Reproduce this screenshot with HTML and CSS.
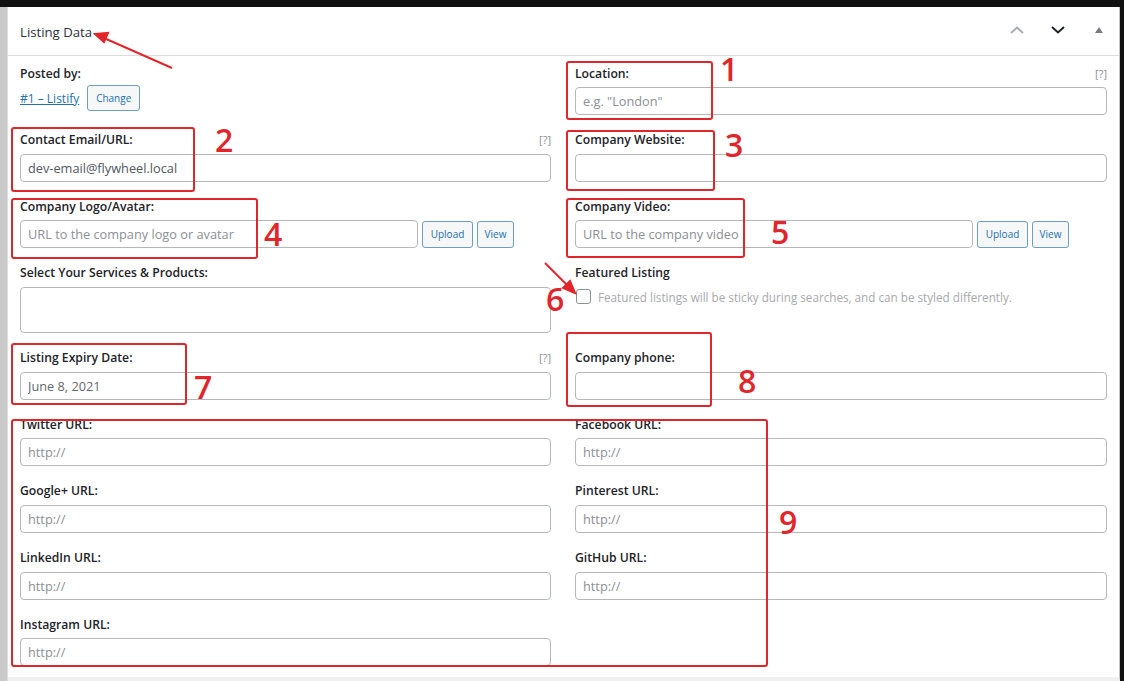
FILE: index.html
```html
<!DOCTYPE html>
<html lang="en">
<head>
<meta charset="utf-8">
<title>Listing Data</title>
<link rel="stylesheet" href="styles.css">
</head>
<body>
<div class="screen">
  <div class="side-strip"></div>
  <div class="panel">
    <div class="panel-head">
      <h2 class="panel-title">Listing Data</h2>
      <div class="head-actions">
        <span class="head-btn up"><svg width="14" height="8" viewBox="0 0 14 8"><path d="M1 7 L7 1.5 L13 7" fill="none" stroke="currentColor" stroke-width="1.8"/></svg></span>
        <span class="head-btn down"><svg width="14" height="8" viewBox="0 0 14 8"><path d="M1 1 L7 6.5 L13 1" fill="none" stroke="currentColor" stroke-width="2"/></svg></span>
        <span class="head-btn toggle"><svg width="8" height="6" viewBox="0 0 8 6"><path d="M0 6 L4 0 L8 6 Z" fill="currentColor"/></svg></span>
      </div>
    </div>
    <div class="panel-body">
      <div class="field">
        <div class="label-row"><label>Posted by:</label></div>
        <div class="posted-row"><a href="#" class="author-link">#1 – Listify</a><button class="btn small">Change</button></div>
      </div>
      <div class="field">
        <div class="label-row"><label>Location:</label><span class="tip">[?]</span></div>
        <input class="text" type="text" placeholder="e.g. &quot;London&quot;">
      </div>

      <div class="field">
        <div class="label-row"><label>Contact Email/URL:</label><span class="tip">[?]</span></div>
        <input class="text" type="text" value="dev-email@flywheel.local">
      </div>
      <div class="field">
        <div class="label-row"><label>Company Website:</label></div>
        <input class="text" type="text">
      </div>

      <div class="field">
        <div class="label-row"><label>Company Logo/Avatar:</label></div>
        <div class="upload-row"><input class="text file" type="text" placeholder="URL to the company logo or avatar"><button class="btn upload">Upload</button><button class="btn view">View</button></div>
      </div>
      <div class="field">
        <div class="label-row"><label>Company Video:</label></div>
        <div class="upload-row"><input class="text file" type="text" placeholder="URL to the company video"><button class="btn upload">Upload</button><button class="btn view">View</button></div>
      </div>

      <div class="field">
        <div class="label-row"><label>Select Your Services &amp; Products:</label></div>
        <textarea class="text area"></textarea>
      </div>
      <div class="field">
        <div class="label-row"><label>Featured Listing</label></div>
        <div class="check-row"><span class="checkbox"></span><span class="check-desc">Featured listings will be sticky during searches, and can be styled differently.</span></div>
      </div>

      <div class="field">
        <div class="label-row"><label>Listing Expiry Date:</label><span class="tip">[?]</span></div>
        <input class="text value-grey" type="text" value="June 8, 2021">
      </div>
      <div class="field">
        <div class="label-row"><label>Company phone:</label></div>
        <input class="text" type="text">
      </div>

      <div class="field">
        <div class="label-row"><label>Twitter URL:</label></div>
        <input class="text" type="text" placeholder="http://">
      </div>
      <div class="field">
        <div class="label-row"><label>Facebook URL:</label></div>
        <input class="text" type="text" placeholder="http://">
      </div>

      <div class="field">
        <div class="label-row"><label>Google+ URL:</label></div>
        <input class="text" type="text" placeholder="http://">
      </div>
      <div class="field">
        <div class="label-row"><label>Pinterest URL:</label></div>
        <input class="text" type="text" placeholder="http://">
      </div>

      <div class="field">
        <div class="label-row"><label>LinkedIn URL:</label></div>
        <input class="text" type="text" placeholder="http://">
      </div>
      <div class="field">
        <div class="label-row"><label>GitHub URL:</label></div>
        <input class="text" type="text" placeholder="http://">
      </div>

      <div class="field">
        <div class="label-row"><label>Instagram URL:</label></div>
        <input class="text" type="text" placeholder="http://">
      </div>
    </div>
  </div>
</div>

<!-- red annotations drawn over the screenshot -->
<div class="mark box b1"></div><div class="mark num n1">1</div>
<div class="mark box b2"></div><div class="mark num n2">2</div>
<div class="mark box b3"></div><div class="mark num n3">3</div>
<div class="mark box b4"></div><div class="mark num n4">4</div>
<div class="mark box b5"></div><div class="mark num n5">5</div>
<div class="mark num n6">6</div>
<div class="mark box b7"></div><div class="mark num n7">7</div>
<div class="mark box b8"></div><div class="mark num n8">8</div>
<div class="mark box b9"></div><div class="mark num n9">9</div>
<svg class="arrows" width="1124" height="681" viewBox="0 0 1124 681">
  <g stroke="#e0262b" stroke-width="2" fill="#e0262b">
    <line x1="172" y1="68" x2="104" y2="38"/>
    <path d="M95 34 L108 33 L104 42 Z"/>
    <line x1="545" y1="263" x2="568" y2="286"/>
    <path d="M575 293 L563 288 L570 281 Z"/>
  </g>
</svg>
</body>
</html>
```
FILE: styles.css
```css
* { box-sizing: border-box; }
html, body { margin: 0; padding: 0; }
body {
  width: 1124px;
  height: 681px;
  overflow: hidden;
  background: #111;
  font-family: "Open Sans", "Noto Sans", sans-serif;
  color: #1d2327;
  position: relative;
}
.screen {
  display: flex;
  padding-top: 7px;
  padding-right: 4px;
  height: 681px;
}
.side-strip {
  width: 8px;
  flex: none;
  background: #c9c9c9;
  border-right: 1px solid #dcdcde;
}
.panel {
  flex: 1;
  background: #fff;
  border-right: 1px solid #c3c4c7;
  border-bottom: 4px solid #f0f0f1;
  display: flex;
  flex-direction: column;
}
.panel-head {
  height: 49px;
  border-bottom: 1px solid #dcdcde;
  display: flex;
  align-items: center;
  justify-content: space-between;
  padding: 2px 13px 0 12px;
}
.panel-title {
  margin: 0;
  font-size: 13.2px;
  font-weight: 400;
  color: #2c3338;
}
.head-actions { display: flex; align-items: center; gap: 27px; margin-top: -4px; }
.head-btn { display: flex; justify-content: center; width: 14px; }
.head-btn.up { color: #a7aaad; }
.head-btn.down { color: #1d2327; }
.head-btn.toggle { color: #787c82; }

.panel-body {
  display: grid;
  grid-template-columns: 531px 532px;
  column-gap: 24px;
  row-gap: 17.66px;
  padding: 10px 12px 0 12px;
  align-content: start;
}
.field { min-width: 0; }
.label-row {
  display: flex;
  justify-content: space-between;
  align-items: center;
  height: 14px;
  margin-bottom: 7px;
}
.label-row label {
  font-size: 12.2px;
  font-weight: 600;
  color: #1d2327;
}
.tip {
  font-size: 11px;
  color: #8c8f94;
}
.text {
  display: block;
  width: 100%;
  height: 28px;
  border: 1px solid #b5b8bb;
  border-radius: 4px;
  padding: 0 7px;
  font-family: "Open Sans", "Noto Sans", sans-serif;
  font-size: 12.75px;
  color: #50575e;
  background: #fff;
  outline: none;
  margin: 0;
}
.text::placeholder { color: #8c8f94; opacity: 1; }
.value-grey { color: #646970; }
.area { height: 46px; resize: none; }

.posted-row {
  display: flex;
  align-items: center;
  gap: 8px;
  margin-top: -2px;
}
.author-link {
  font-size: 12px;
  color: #2271b1;
  text-decoration: underline;
}
.btn {
  font-family: "Open Sans", "Noto Sans", sans-serif;
  font-size: 10px;
  color: #2271b1;
  background: #f6f7f7;
  border: 1px solid #6f9cc2;
  border-radius: 3px;
  height: 27px;
  padding: 0;
  margin: 0;
  cursor: pointer;
}
.btn.small { height: 26px; width: 53px; }
.upload-row { display: flex; align-items: center; gap: 4px; height: 28px; }
.upload-row .file { width: 398px; flex: none; }
.btn.upload { width: 51px; }
.btn.view { width: 37px; }

.check-row { display: flex; align-items: center; gap: 7px; padding: 2px 0 0 1px; }
.checkbox {
  width: 15px;
  height: 15px;
  border: 1px solid #8c8f94;
  border-radius: 3px;
  background: #fff;
  flex: none;
}
.check-desc { font-size: 11.7px; color: #a7aaad; }

/* annotations */
.mark { position: absolute; }
.box { border: 2.5px solid #e0262b; border-radius: 3px; }
.num {
  color: #e0262b;
  font-family: "Open Sans", sans-serif;
  font-weight: 600;
  font-size: 32px;
  line-height: 1;
}
.b1 { left: 566px; top: 61px; width: 147px; height: 59px; }
.n1 { left: 720px; top: 53px; }
.b2 { left: 11px; top: 127px; width: 184px; height: 65px; }
.n2 { left: 215px; top: 124px; }
.b3 { left: 566px; top: 130px; width: 149px; height: 61px; }
.n3 { left: 725px; top: 129px; }
.b4 { left: 11px; top: 198px; width: 247px; height: 61px; }
.n4 { left: 264px; top: 218px; }
.b5 { left: 566px; top: 198px; width: 179px; height: 60px; }
.n5 { left: 771px; top: 216px; }
.n6 { left: 546px; top: 283px; }
.b7 { left: 11px; top: 343px; width: 176px; height: 62px; }
.n7 { left: 194px; top: 371px; }
.b8 { left: 566px; top: 332px; width: 146px; height: 75px; }
.n8 { left: 738px; top: 365px; }
.b9 { left: 11px; top: 419px; width: 757px; height: 248px; }
.n9 { left: 779px; top: 506px; }
.arrows { position: absolute; left: 0; top: 0; pointer-events: none; }
```
